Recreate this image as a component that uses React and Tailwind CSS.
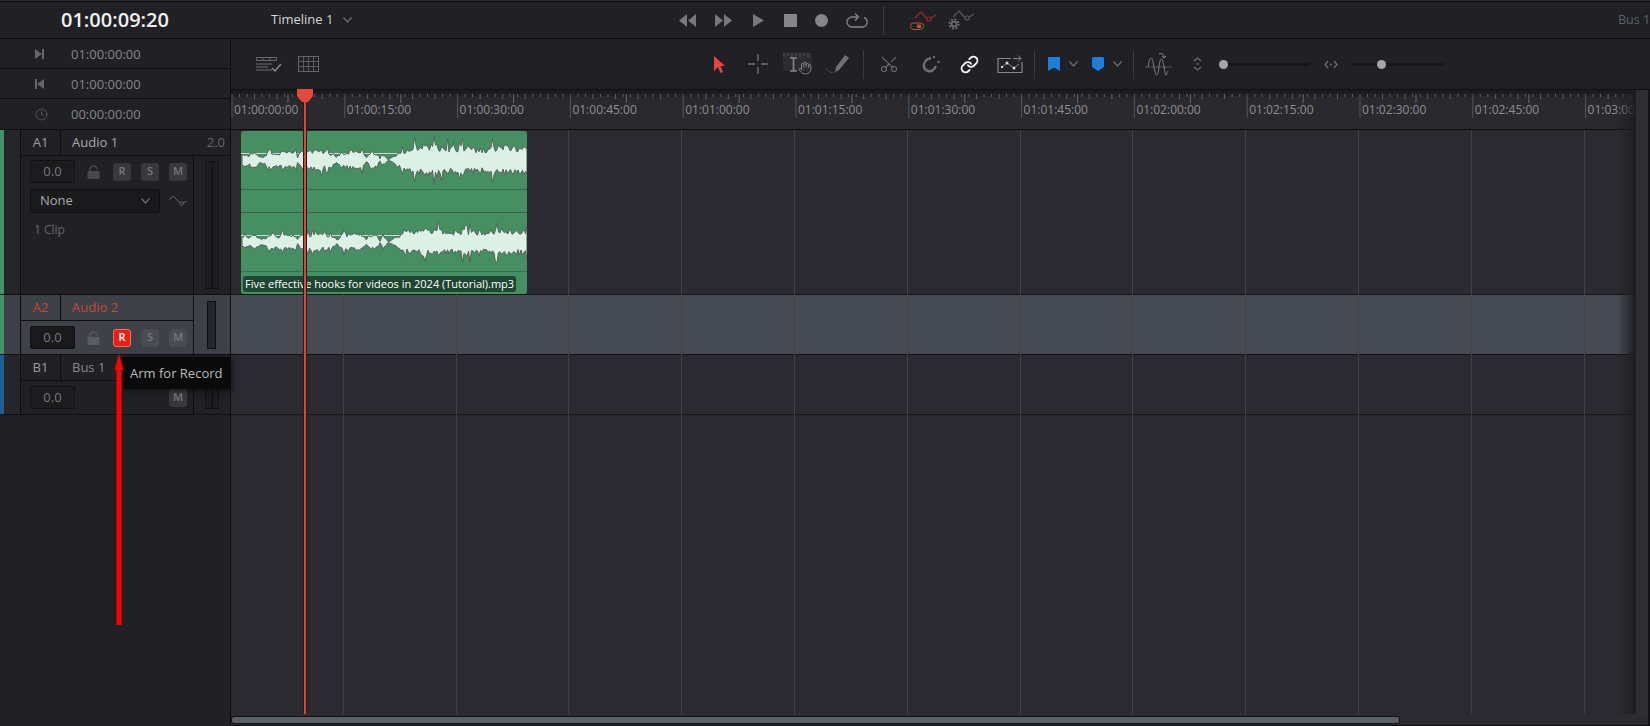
import { Clock, Hand, Link, Scissors } from "lucide-react";

const labels = ["01:00:00:00", "01:00:15:00", "01:00:30:00", "01:00:45:00", "01:01:00:00", "01:01:15:00", "01:01:30:00", "01:01:45:00", "01:02:00:00", "01:02:15:00", "01:02:30:00", "01:02:45:00", "01:03:00:00"];

// envelope of the clip audio: [x, half height]
const envelope = [[0, 3], [2, 7], [9, 5], [10, 7], [15, 8], [19, 4], [24, 4], [28, 10], [36, 7], [42, 9], [55, 8], [56, 2], [59, 7], [62, 9], [78, 10], [92, 7], [96, 2], [100, 9], [120, 10], [126, 2], [129, 9], [136, 8], [139, 1], [141, 6], [145, 4], [147, 0], [160, 9], [168, 13], [190, 15], [215, 12], [225, 14], [240, 11], [260, 15], [275, 13], [286, 14]];

function envAt(x) {
  for (let i = 1; i < envelope.length; i++) {
    const [x0, a0] = envelope[i - 1];
    const [x1, a1] = envelope[i];
    if (x <= x1) return a0 + ((a1 - a0) * (x - x0)) / (x1 - x0);
  }
  return 0;
}

function noise(x, k, seed) {
  const n = Math.sin(x * k + seed) * 43758.5453;
  return n - Math.floor(n);
}

function wavePath(seed, scale) {
  const top = [];
  const bottom = [];
  for (let x = 1; x <= 286; x += 1.5) {
    const a = envAt(x) * scale;
    const s = noise(x, 3.71, seed) > 0.86 ? 1.55 : 1;
    const up = a * (0.6 + 0.5 * noise(x, 12.9898, seed)) * s;
    const down = a * (0.6 + 0.5 * noise(x, 78.233, seed)) * s;
    top.push(`${x},${(29 - up).toFixed(1)}`);
    bottom.unshift(`${x},${(29 + down).toFixed(1)}`);
  }
  return `M${top.join("L")}L${bottom.join("L")}Z`;
}

function Channel({ seed, scale }) {
  return (
    <svg width="286" height="81" className="block">
      <line x1="0" x2="286" y1="22.5" y2="22.5" stroke="#c9dcd0" />
      <line x1="0" x2="286" y1="58.5" y2="58.5" stroke="#3a6a4f" />
      <path d={wavePath(seed, scale)} fill="#dcf0e6" stroke="#566259" strokeWidth="1" />
    </svg>
  );
}

function RulerTicks() {
  const ticks = [];
  for (let i = 0; i < 190; i++) {
    const x = 1 + i * (112.8 / 15);
    let h = i % 3 === 0 ? 5 : 3;
    if (i % 15 === 0) h = 24;
    else if (i % 15 === 7) h = 3;
    ticks.push(<line key={i} x1={x} x2={x} y1="4" y2={4 + h} stroke={i % 15 === 0 ? "#55565a" : "#5f6064"} />);
  }
  for (let i = 0; i < 13; i++) {
    const x = 57 + i * 112.8;
    ticks.push(<line key={"m" + i} x1={x} x2={x} y1="4" y2="13" stroke="#66676b" />);
  }
  return (
    <svg width="1405" height="30" className="absolute top-0 left-0">
      {ticks}
    </svg>
  );
}

function Sep({ className }) {
  return <div className={`w-px h-[29px] bg-[#3b3c40] shrink-0 ${className}`} />;
}

function Chevron({ className }) {
  return (
    <svg width="9" height="6" viewBox="0 0 9 6" className={`shrink-0 ${className}`}>
      <path d="M.5.5 4.5 5l4-4.5" fill="none" stroke="#6f7074" strokeWidth="1.2" />
    </svg>
  );
}

function Btn({ children, active, className }) {
  return (
    <div className={`w-[18px] h-[18px] rounded-[3px] flex items-center justify-center text-[11px] font-semibold shrink-0 ${active ? "bg-[#e8201a] text-white border border-[#ff6a50]" : "bg-[#38383d] text-[#77787c]"} ${className}`}>
      {children}
    </div>
  );
}

function Lock({ color = "#47484c" }) {
  return (
    <svg width="13" height="14" viewBox="0 0 13 14" className="ml-[12px] shrink-0">
      <path d="M3 7V4.5a3.5 3.5 0 0 1 7 0" fill="none" stroke={color} strokeWidth="1.6" />
      <rect x="0.5" y="6" width="12" height="8" rx="1" fill={color} />
    </svg>
  );
}

function Level({ dark }) {
  return (
    <div className={`w-[45px] h-[23px] ml-[9px] shrink-0 rounded-[2px] border border-[#111114] flex items-center justify-center text-[13px] text-[#77787c] ${dark ? "bg-[#1a1a1d]" : "bg-[#1c1c1f]"}`}>
      0.0
    </div>
  );
}

function Meter({ className }) {
  return (
    <div className={`w-[14px] flex border border-[#0f0f11] bg-[#1d1d21] ml-[11px] ${className}`}>
      <div className="flex-1 border-r border-[#0f0f11]" />
      <div className="flex-1" />
    </div>
  );
}

function TrackHead({ id, name, right, red }) {
  const color = red ? "text-[#c9473a]" : "text-[#9a9b9e]";
  return (
    <div className="h-[26px] flex items-center border-b border-[#0e0e10] text-[13px] shrink-0">
      <div className={`w-[40px] h-full flex items-center justify-center border-r border-[#0e0e10] ${color}`}>{id}</div>
      <div className={`ml-[11px] flex-1 ${red ? "text-[#c9473a]" : id === "A1" ? "text-[#a8a9ac]" : "text-[#86878a]"}`}>{name}</div>
      {right && <div className="mr-[5px] text-[#66676b]">{right}</div>}
    </div>
  );
}

function Sidebar() {
  return (
    <div className="w-[231px] shrink-0 border-r border-[#0e0e10] flex flex-col">
      {[
        { h: "h-[30px]", t: "01:00:00:00", icon: <svg width="9" height="10" viewBox="0 0 9 10"><path d="M0 0l7 5-7 5zM7 0h2v10H7z" fill="#66676b" /></svg> },
        { h: "h-[30px]", t: "01:00:00:00", icon: <svg width="9" height="10" viewBox="0 0 9 10"><path d="M9 0L2 5l7 5zM0 0h2v10H0z" fill="#66676b" /></svg> },
        { h: "h-[31px]", t: "00:00:00:00", icon: <Clock size={13} strokeWidth={1.3} color="#66676b" /> },
      ].map((r, i) => (
        <div key={i} className={`${r.h} flex items-center border-b border-[#0e0e10] shrink-0`}>
          <div className="w-[71px] pl-[35px] flex">{r.icon}</div>
          <span className="text-[13px] pt-[2px] text-[#85868a]">{r.t}</span>
        </div>
      ))}

      {/* A1 */}
      <div className="h-[165px] flex border-b border-[#0e0e10] shrink-0">
        <div className="w-[4px] bg-[#45916a]" />
        <div className="w-[17px] bg-[#26262a] border-r border-[#0e0e10]" />
        <div className="flex-1 flex flex-col">
          <TrackHead id="A1" name="Audio 1" right="2.0" />
          <div className="flex-1 flex">
            <div className="w-[173px] border-r border-[#0e0e10] pt-[4px]">
              <div className="flex items-center">
                <Level />
                <Lock />
                <Btn className="ml-[13px]">R</Btn>
                <Btn className="ml-[10px]">S</Btn>
                <Btn className="ml-[10px]">M</Btn>
              </div>
              <div className="flex items-center mt-[6px]">
                <div className="w-[130px] h-[24px] ml-[9px] rounded-[2px] bg-[#1a1a1d] border border-[#0f0f11] flex items-center justify-between pl-[9px] pr-[9px] text-[13px] text-[#a8a9ac]">
                  None
                  <Chevron />
                </div>
                <svg width="20" height="12" viewBox="0 0 20 12" className="ml-[8px]">
                  <path d="M1 5l4-4 7 7" fill="none" stroke="#66676b" />
                  <path d="M15 8l4-2" fill="none" stroke="#66676b" />
                  <circle cx="13.5" cy="8.5" r="1.7" fill="none" stroke="#66676b" />
                </svg>
              </div>
              <div className="ml-[13px] mt-[8px] text-[12px] text-[#66676b]">1 Clip</div>
            </div>
            <div className="flex-1 py-[5px]">
              <Meter className="h-full" />
            </div>
          </div>
        </div>
      </div>

      {/* A2 */}
      <div className="h-[60px] flex border-b border-[#0e0e10] shrink-0 bg-[#3e4148]">
        <div className="w-[4px] bg-[#45916a]" />
        <div className="w-[17px] border-r border-[#0e0e10]" />
        <div className="w-[173px] border-r border-[#0e0e10] flex flex-col">
          <TrackHead id="A2" name="Audio 2" red />
          <div className="flex-1 flex items-center">
            <Level dark />
            <Lock color="#5a5c62" />
            <Btn active className="ml-[13px]">R</Btn>
            <Btn className="ml-[10px] bg-[#4a4c52]!">S</Btn>
            <Btn className="ml-[10px] bg-[#4a4c52]!">M</Btn>
          </div>
        </div>
        <div className="flex-1 flex items-center">
          <div className="w-[9px] h-[48px] ml-[13px] bg-[#26262b] border border-[#0f0f11]" />
        </div>
      </div>

      {/* B1 */}
      <div className="h-[60px] flex border-b border-[#0e0e10] shrink-0">
        <div className="w-[4px] bg-[#1f5f96]" />
        <div className="w-[17px] bg-[#26262a] border-r border-[#0e0e10]" />
        <div className="flex-1 flex flex-col">
          <TrackHead id="B1" name="Bus 1" />
          <div className="flex-1 flex items-center">
            <div className="w-[173px] h-full border-r border-[#0e0e10] flex items-center">
              <Level />
              <Btn className="ml-[94px]">M</Btn>
            </div>
            <Meter className="h-[22px]" />
          </div>
        </div>
      </div>
    </div>
  );
}

function Toolbar() {
  const gray = "#6f7074";
  return (
    <div className="h-[51px] border-b border-[#0e0e10] flex items-center shrink-0">
      <svg width="26" height="17" viewBox="0 0 26 17" className="ml-[25px] shrink-0">
        <path d="M.5 1.5h20v3H.5zM7 1.5v3M14 1.5v3" fill="none" stroke="#67686c" />
        <path d="M0 8h16M0 11h12M0 14h16" stroke="#55565a" strokeWidth="1.4" />
        <path d="M16 12l3 3 6-7" fill="none" stroke="#85868a" strokeWidth="1.5" />
      </svg>
      <svg width="21" height="16" viewBox="0 0 21 16" className="ml-[16px] shrink-0">
        <rect x=".5" y=".5" width="20" height="15" fill="none" stroke="#67686c" />
        <path d="M.5 5.5h20M.5 10.5h20M5.5.5v15M10.5.5v15M15.5.5v15" stroke="#5a5b5f" />
      </svg>

      <svg width="13" height="17" viewBox="0 0 13 17" className="ml-[394px] shrink-0">
        <path d="M1 0l11 10H7.5l2.5 6-2.5 1L5 11l-4 4z" fill="#e8453c" />
      </svg>
      <svg width="20" height="20" viewBox="0 0 20 20" className="ml-[22px] shrink-0">
        <path d="M0 10h7M13 10h7M10 0v7M10 13v7" stroke={gray} strokeWidth="1.4" />
      </svg>
      <div className="relative w-[29px] h-[22px] ml-[15px] shrink-0">
        <svg width="29" height="22" viewBox="0 0 29 22" className="block">
          <rect x="0" y="0" width="29" height="18" fill="#2c2d30" />
          <path d="M1 0v4M5 0v3M9 0v4M13 0v3M17 0v4M21 0v3M25 0v4" stroke="#5a5b5f" />
          <path d="M7 5h7M7 18h7M10.5 5v13" stroke="#85868a" strokeWidth="1.6" />
        </svg>
        <Hand size={14} strokeWidth={1.6} color="#85868a" className="absolute right-0 bottom-0" />
      </div>
      <svg width="25" height="20" viewBox="0 0 25 20" className="ml-[13px] shrink-0">
        <path d="M1 14c2 4 5 5 9 4" fill="none" stroke="#55565a" strokeDasharray="2 1" />
        <path d="M20 1l4 3-10 12-4 2 1-5z" fill="#6f7074" />
      </svg>
      <Sep className="ml-[13px]" />
      <Scissors size={20} strokeWidth={1.3} color={gray} className="ml-[15px] -rotate-90 shrink-0" />
      <svg width="19" height="19" viewBox="0 0 19 19" className="ml-[22px] shrink-0">
        <path d="M10 3C5 4 2 8 3 12c1 4 7 6 10 2 1-1 1.500-2 1.500-3" fill="none" stroke={gray} strokeWidth="2.4" />
        <circle cx="13" cy="2" r="1.200" fill={gray} />
        <circle cx="17.500" cy="7" r="1.200" fill={gray} />
      </svg>
      <Link size={19} strokeWidth={2.4} color="#f2f2f2" className="ml-[20px] shrink-0" />
      <svg width="26" height="20" viewBox="0 0 26 20" className="ml-[18px] shrink-0">
        <path d="M14 4.500H1v14h24V8" fill="none" stroke="#85868a" strokeWidth="1.2" />
        <path d="M16 4.500h8M21 1.500l3 3-3 3" fill="none" stroke="#85868a" />
        <path d="M5 13l5-4 7 5 5-4" fill="none" stroke="#85868a" />
        <circle cx="10" cy="9" r="1.500" fill="#d6d7d9" />
        <circle cx="17" cy="14" r="1.500" fill="#d6d7d9" />
        <circle cx="5" cy="13" r="1.200" fill="#d6d7d9" />
      </svg>
      <Sep className="ml-[11px]" />
      <svg width="12" height="14" viewBox="0 0 12 14" className="ml-[13px] shrink-0">
        <path d="M0 0h12v14L6 10.500 0 14z" fill="#1b7fdb" />
      </svg>
      <Chevron className="ml-[9px]" />
      <svg width="12" height="14" viewBox="0 0 12 14" className="ml-[14px] shrink-0">
        <path d="M1.500 0h9A1.500 1.500 0 0 1 12 1.500V10l-6 4-6-4V1.500A1.500 1.500 0 0 1 1.500 0z" fill="#1b7fdb" />
      </svg>
      <Chevron className="ml-[9px]" />
      <Sep className="ml-[11px]" />
      <svg width="27" height="24" viewBox="0 0 27 24" className="ml-[11px] shrink-0">
        <path d="M0 15h27" stroke="#55565a" />
        <path d="M3 15c2-12 4-12 6 0s4 9 5 0 3-12 5 0 2 8 4 4" fill="none" stroke="#7f8084" />
        <path d="M14 2c3-1 5 0 5 3M17 4l2 2 2-2" fill="none" stroke="#85868a" />
      </svg>
      <svg width="9" height="14" viewBox="0 0 9 14" className="ml-[21px] shrink-0">
        <path d="M1 4l3.500-3L8 4M1 10l3.500 3L8 10" fill="none" stroke={gray} strokeWidth="1.200" />
        <circle cx="4.500" cy="7" r="0.900" fill={gray} />
      </svg>
      <div className="w-[91px] h-[3px] ml-[17px] bg-[#17171a] flex items-center shrink-0">
        <div className="w-[9px] h-[9px] rounded-full bg-[#a5a6a8]" />
      </div>
      <svg width="14" height="9" viewBox="0 0 14 9" className="ml-[14px] shrink-0">
        <path d="M4 1L1 4.500 4 8M10 1l3 3.500L10 8" fill="none" stroke={gray} strokeWidth="1.200" />
        <circle cx="7" cy="4.500" r="0.900" fill={gray} />
      </svg>
      <div className="w-[92px] h-[3px] ml-[14px] bg-[#17171a] flex items-center shrink-0">
        <div className="w-[9px] h-[9px] ml-[25px] rounded-full bg-[#a5a6a8]" />
      </div>
    </div>
  );
}

function Timeline() {
  return (
    <div className="flex-1 flex flex-col bg-[#2a2a30]">
      <div className="flex-1 flex min-h-0">
        <div className="w-[1405px] relative flex flex-col overflow-hidden">
          {/* ruler */}
          <div className="h-[40px] relative flex border-b border-[#0e0e10] shrink-0 bg-gradient-to-b from-[#1c1c20] from-[8%] to-[#29292e] to-[20%]">
            <RulerTicks />
            {labels.map((l) => (
              <div key={l} className="w-[112.8px] shrink-0 pl-[3px] pt-[11px] text-[12px] leading-[17px] text-[#8e8f92]">{l}</div>
            ))}
          </div>

          {/* tracks */}
          <div className="flex-1 relative">
            <div className="h-[165px] border-b border-[#17171a] pl-[10px] pt-[1px]">
              <div className="relative z-10 w-[286px] h-[163px] rounded-[3px] bg-[#458f63] overflow-hidden flex flex-col">
                <Channel seed={1.3} scale={1} />
                <div className="h-px bg-[#35654a]" />
                <Channel seed={4.7} scale={0.9} />
                <div className="absolute left-[2px] bottom-[2px] w-[273px] h-[16px] rounded-[3px] bg-[#1f4533] pl-[2px] text-[11px] leading-[16px] text-white whitespace-nowrap">
                  Five effective hooks for videos in 2024 (Tutorial).mp3
                </div>
              </div>
            </div>
            <div className="h-[60px] bg-[#464a52] border-b border-[#111114]" />
            <div className="h-[60px] border-b border-[#17171a]" />

            {/* grid lines */}
            <div className="absolute inset-0 flex">
              {labels.map((l) => (
                <div key={l} className="w-[112.8px] shrink-0 border-r border-[#414247]" />
              ))}
            </div>
          </div>
          <div className="absolute right-0 top-0 bottom-0 w-[18px] bg-gradient-to-r from-transparent to-[#1d1d21]" />
        </div>
        <div className="flex-1 bg-[#2e2f34] border-r-2 border-[#141416] pr-px" />
      </div>

      {/* scrollbar */}
      <div className="h-[11px] bg-[#2b2c31] border-r-2 border-[#141416] flex items-center shrink-0">
        <div className="w-[1169px] h-[8px] rounded-[3px] bg-[#5b6067] border border-[#111114]" />
      </div>
      <div className="h-px bg-[#0e0e10] shrink-0" />
    </div>
  );
}

export default function App() {
  return (
    <div className="relative w-[1650px] h-[726px] overflow-hidden flex flex-col bg-[#212125] font-['Open_Sans',sans-serif]">
      <div className="h-px bg-[#2a2a2e] shrink-0" />

      {/* Top bar */}
      <div className="h-[38px] flex items-center border-y border-[#0e0e10] shrink-0">
        <div className="w-[271px] pl-[61px] text-[20px] font-semibold text-[#f0f0f0] shrink-0">01:00:09:20</div>
        <div className="w-[407px] flex items-center text-[13px] text-[#d5d5d7] shrink-0">
          Timeline 1
          <Chevron className="ml-[10px]" />
        </div>
        <svg width="18" height="13" viewBox="0 0 18 13" className="shrink-0"><path d="M9 0v13L1 6.500zM18 0v13L10 6.500z" fill="#77787c" /></svg>
        <svg width="18" height="13" viewBox="0 0 18 13" className="ml-[19px] shrink-0"><path d="M0 0v13l8-6.500zM9 0v13l8-6.500z" fill="#77787c" /></svg>
        <svg width="11" height="13" viewBox="0 0 11 13" className="ml-[20px] shrink-0"><path d="M0 0v13l11-6.500z" fill="#77787c" /></svg>
        <div className="w-[13px] h-[13px] ml-[20px] bg-[#85868a] shrink-0" />
        <div className="w-[13px] h-[13px] ml-[18px] rounded-full bg-[#85868a] shrink-0" />
        <svg width="22" height="15" viewBox="0 0 22 15" className="ml-[18px] shrink-0">
          <path d="M11 4H6a5 5 0 0 0 0 10h10a5 5 0 0 0 2-9.600" fill="none" stroke="#85868a" strokeWidth="1.300" />
          <path d="M9 .5L12.500 4 9 7.500" fill="none" stroke="#85868a" strokeWidth="1.300" />
        </svg>
        <div className="w-px h-[29px] ml-[15px] bg-[#3b3c40] shrink-0" />
        <svg width="27" height="19" viewBox="0 0 27 19" className="ml-[26px] shrink-0">
          <path d="M5 7l6-6 6 7M21 7l5-3" fill="none" stroke="#8c2d28" strokeWidth="1.300" />
          <circle cx="19" cy="8" r="2" fill="none" stroke="#8c2d28" strokeWidth="1.200" />
          <rect x=".5" y="12" width="13" height="6.500" rx="3.200" fill="none" stroke="#d8433a" />
          <rect x="7" y="13.500" width="4" height="3.500" fill="#d8433a" />
        </svg>
        <svg width="26" height="20" viewBox="0 0 26 20" className="ml-[11px] shrink-0">
          <path d="M5 7l6-6 6 7M21 7l5-3" fill="none" stroke="#55565a" strokeWidth="1.200" />
          <circle cx="19" cy="8" r="2" fill="none" stroke="#55565a" strokeWidth="1.200" />
          <circle cx="6" cy="14" r="2.500" fill="none" stroke="#6f7074" strokeWidth="1.600" />
          <circle cx="6" cy="14" r="4.600" fill="none" stroke="#6f7074" strokeWidth="1.800" strokeDasharray="2 1.600" />
        </svg>
        <div className="ml-auto w-[32px] text-[12.5px] text-[#56646f] whitespace-nowrap shrink-0">Bus 1</div>
      </div>

      <div className="flex-1 flex min-h-0">
        <Sidebar />
        <div className="flex-1 flex flex-col min-w-0">
          <Toolbar />
          <Timeline />
        </div>
      </div>

      {/* playhead */}
      <div className="absolute z-20 left-[303px] top-[102px] w-[4px] h-[612px] bg-[#d6473c] border-x border-[#2a1a1a]" />
      <svg width="16" height="14" viewBox="0 0 16 14" className="absolute z-20 left-[297px] top-[89px]">
        <path d="M0 0h16v7l-5 6H5L0 7z" fill="#e5483d" />
      </svg>

      {/* tooltip */}
      <div className="absolute z-30 left-[122px] top-[357px] w-[108px] h-[32px] bg-[#0a0a0b] flex items-center pl-[8px] pt-px text-[13px] text-[#b9bbbe] shadow-[2px_2px_6px_rgba(0,0,0,0.5)]">
        Arm for Record
      </div>

      {/* annotation arrow */}
      <svg width="10" height="272" viewBox="0 0 10 272" className="absolute z-40 left-[114px] top-[354px]">
        <path d="M5 0l4.500 16H7.500v255h-5V16H.5z" fill="#fe0000" />
      </svg>
    </div>
  );
}
